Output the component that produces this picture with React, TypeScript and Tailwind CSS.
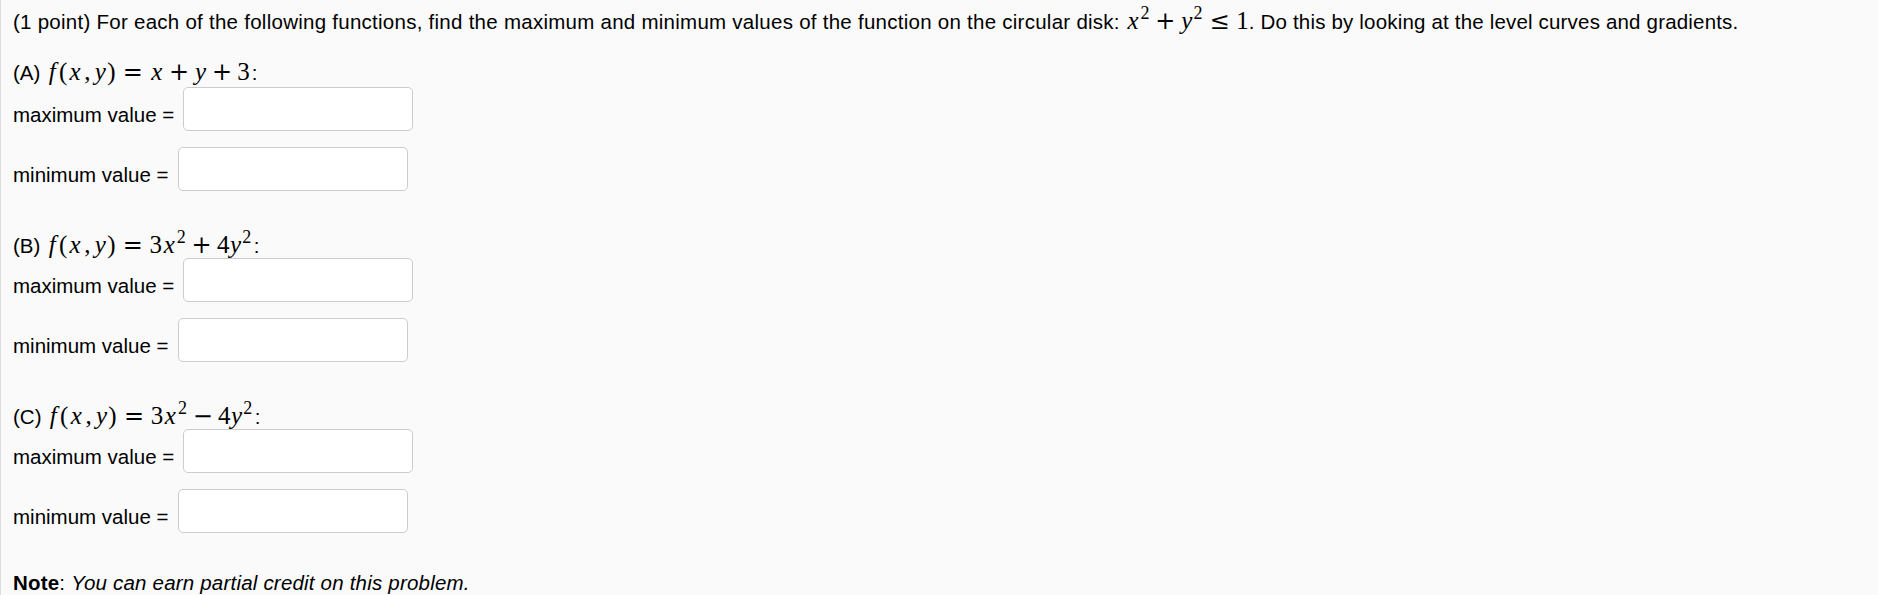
import type { ReactNode } from 'react';

const mathFont = { fontFamily: '"Liberation Serif", "DejaVu Serif", serif' };
const opFont = { fontFamily: '"DejaVu Serif", "Liberation Serif", serif' };

// Glyph boxes use Computer Modern widths (at 25px) so the formulas take the same room as in KaTeX
function G({ w, italic, children }: { w: string; italic?: boolean; children: ReactNode }) {
  return <span className={`inline-block text-center ${w} ${italic ? 'italic' : ''}`}>{children}</span>;
}

function Op({ w, children }: { w: string; children: ReactNode }) {
  return (
    <span className={`inline-block text-center text-[24px] ${w}`} style={opFont}>
      {children}
    </span>
  );
}

const F = () => <G w="w-[12.25px]" italic>f</G>;
const X = () => <G w="w-[14.3px]" italic>x</G>;
const Y = () => <G w="w-[12.25px]" italic>y</G>;
const LP = () => <G w="w-[9.7px]">(</G>;
const RP = () => <G w="w-[9.7px]">)</G>;
const Comma = () => <span className="inline-block w-[12px] pl-[2px] text-left">,</span>;
const Eq = () => <Op w="w-[33.35px]">=</Op>;
const Le = () => <Op w="w-[33.35px]">≤</Op>;
const Plus = () => <Op w="w-[30.55px]">+</Op>;
const Minus = () => <Op w="w-[30.55px]">−</Op>;
const D = ({ n }: { n: string }) => <G w="w-[12.5px]">{n}</G>;
const Sq = () => <span className="relative -top-[10px] inline-block w-[10px] text-center text-[18px]">2</span>;

function Math({ children }: { children: ReactNode }) {
  return (
    <span className="whitespace-nowrap text-[25px] leading-none tracking-normal" style={mathFont}>
      {children}
    </span>
  );
}

function Fxy() {
  return (
    <>
      <F />
      <LP />
      <X />
      <Comma />
      <Y />
      <RP />
      <Eq />
    </>
  );
}

function AnswerRow({ label, first }: { label: string; first?: boolean }) {
  return (
    <div className={`flex h-[44px] items-center gap-[9px] ${first ? '' : 'mt-[16px]'}`}>
      <span className="mt-[12px]">{label}</span>
      <input
        type="text"
        className="h-[44px] w-[230px] rounded-[5px] border border-[#cccccc] bg-white px-2 outline-none"
      />
    </div>
  );
}

function Part({ letter, formula, first }: { letter: string; formula: ReactNode; first?: boolean }) {
  return (
    <>
      <div className={`h-[26px] whitespace-nowrap leading-[26px] ${first ? 'mt-[17px]' : 'mt-[41px]'}`}>
        <span>({letter}) </span>
        <Math>{formula}</Math>
        <span className="pl-[2px]">:</span>
      </div>
      <div className={first ? 'mt-[2px]' : ''}>
        <AnswerRow label="maximum value =" first />
        <AnswerRow label="minimum value =" />
      </div>
    </>
  );
}

export default function App() {
  return (
    <div
      className="h-[595px] overflow-hidden border-l border-[#dddddd] bg-[#fafafa] pl-[12px] text-[20.5px] text-black"
      style={{ fontFamily: '"Liberation Sans", Arial, sans-serif' }}
    >
      <div className="h-[42px] whitespace-nowrap pt-[8px] leading-[26px]">
        <span className="tracking-[0.26px]">
          (1 point) For each of the following functions, find the maximum and minimum values of the function on the
          circular disk:{' '}
        </span>
        <Math>
          <X />
          <Sq />
          <Plus />
          <Y />
          <Sq />
          <Le />
          <D n="1" />
        </Math>
        <span className="tracking-[0.18px]">. Do this by looking at the level curves and gradients.</span>
      </div>

      <Part
        first
        letter="A"
        formula={
          <>
            <Fxy />
            <X />
            <Plus />
            <Y />
            <Plus />
            <D n="3" />
          </>
        }
      />
      <Part
        letter="B"
        formula={
          <>
            <Fxy />
            <D n="3" />
            <X />
            <Sq />
            <Plus />
            <D n="4" />
            <Y />
            <Sq />
          </>
        }
      />
      <Part
        letter="C"
        formula={
          <>
            <Fxy />
            <D n="3" />
            <X />
            <Sq />
            <Minus />
            <D n="4" />
            <Y />
            <Sq />
          </>
        }
      />

      <div className="mt-[37px] h-[26px] whitespace-nowrap leading-[26px] tracking-[0.2px]">
        <span className="font-bold">Note</span>
        <span>: </span>
        <span className="italic">You can earn partial credit on this problem.</span>
      </div>
    </div>
  );
}
